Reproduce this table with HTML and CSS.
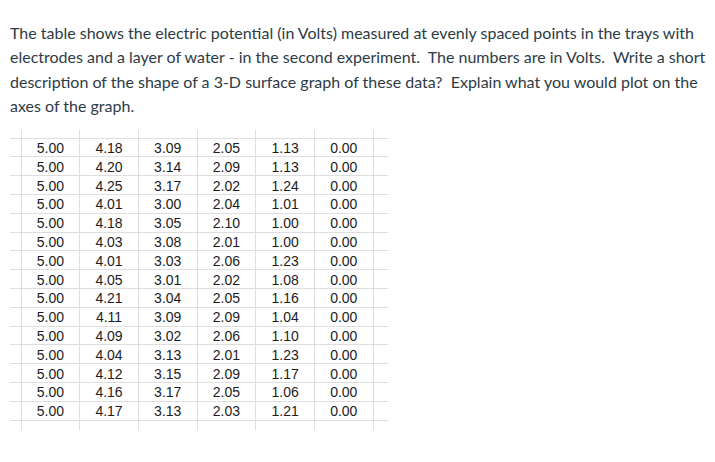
FILE: index.html
```html
<!DOCTYPE html>
<html>
<head>
<meta charset="utf-8">
<link rel="stylesheet" href="styles.css">
</head>
<body>
<p class="question">The table shows the electric potential (in Volts) measured at evenly spaced points in the trays with electrodes and a layer of water - in the second experiment.&nbsp; The numbers are in Volts.&nbsp; Write a short description of the shape of a 3-D surface graph of these data?&nbsp; Explain what you would plot on the axes of the graph.</p>
<table class="sheet">
<colgroup>
<col class="edge-l"><col class="c"><col class="c"><col class="c"><col class="c"><col class="c"><col class="c"><col class="edge-r">
</colgroup>
<tr class="top"><td></td><td></td><td></td><td></td><td></td><td></td><td></td><td></td></tr>
<tr><td></td><td>5.00</td><td>4.18</td><td>3.09</td><td>2.05</td><td>1.13</td><td>0.00</td><td></td></tr>
<tr><td></td><td>5.00</td><td>4.20</td><td>3.14</td><td>2.09</td><td>1.13</td><td>0.00</td><td></td></tr>
<tr><td></td><td>5.00</td><td>4.25</td><td>3.17</td><td>2.02</td><td>1.24</td><td>0.00</td><td></td></tr>
<tr><td></td><td>5.00</td><td>4.01</td><td>3.00</td><td>2.04</td><td>1.01</td><td>0.00</td><td></td></tr>
<tr><td></td><td>5.00</td><td>4.18</td><td>3.05</td><td>2.10</td><td>1.00</td><td>0.00</td><td></td></tr>
<tr><td></td><td>5.00</td><td>4.03</td><td>3.08</td><td>2.01</td><td>1.00</td><td>0.00</td><td></td></tr>
<tr><td></td><td>5.00</td><td>4.01</td><td>3.03</td><td>2.06</td><td>1.23</td><td>0.00</td><td></td></tr>
<tr><td></td><td>5.00</td><td>4.05</td><td>3.01</td><td>2.02</td><td>1.08</td><td>0.00</td><td></td></tr>
<tr><td></td><td>5.00</td><td>4.21</td><td>3.04</td><td>2.05</td><td>1.16</td><td>0.00</td><td></td></tr>
<tr><td></td><td>5.00</td><td>4.11</td><td>3.09</td><td>2.09</td><td>1.04</td><td>0.00</td><td></td></tr>
<tr><td></td><td>5.00</td><td>4.09</td><td>3.02</td><td>2.06</td><td>1.10</td><td>0.00</td><td></td></tr>
<tr><td></td><td>5.00</td><td>4.04</td><td>3.13</td><td>2.01</td><td>1.23</td><td>0.00</td><td></td></tr>
<tr><td></td><td>5.00</td><td>4.12</td><td>3.15</td><td>2.09</td><td>1.17</td><td>0.00</td><td></td></tr>
<tr><td></td><td>5.00</td><td>4.16</td><td>3.17</td><td>2.05</td><td>1.06</td><td>0.00</td><td></td></tr>
<tr><td></td><td>5.00</td><td>4.17</td><td>3.13</td><td>2.03</td><td>1.21</td><td>0.00</td><td></td></tr>
<tr class="bottom"><td></td><td></td><td></td><td></td><td></td><td></td><td></td><td></td></tr>
</table>
</body>
</html>
```
FILE: styles.css
```css
html, body {
  margin: 0;
  padding: 0;
  background: #ffffff;
}
body {
  padding: 0 0 0 10px;
}
.question {
  margin: 21px 0 0 0;
  font-family: Lato, "Open Sans", sans-serif;
  font-size: 16px;
  line-height: 24.3px;
  color: #2d3b45;
}
.sheet {
  margin-top: 12px;
  border-collapse: collapse;
  border-style: hidden;
  table-layout: fixed;
  width: 378px;
  font-family: "Liberation Sans", Arial, sans-serif;
  font-size: 14px;
  color: #1c1c1c;
}
.sheet col.edge-l { width: 11px; }
.sheet col.c { width: 58.7px; }
.sheet col.edge-r { width: 15px; }
.sheet td {
  border: 1px solid #dedede;
  padding: 1px 0 0 0;
  height: 18.8px;
  line-height: 16px;
  text-align: center;
  box-sizing: border-box;
}
.sheet tr.top td { height: 8px; padding: 0; }
.sheet tr.bottom td { height: 10px; padding: 0; }
```
